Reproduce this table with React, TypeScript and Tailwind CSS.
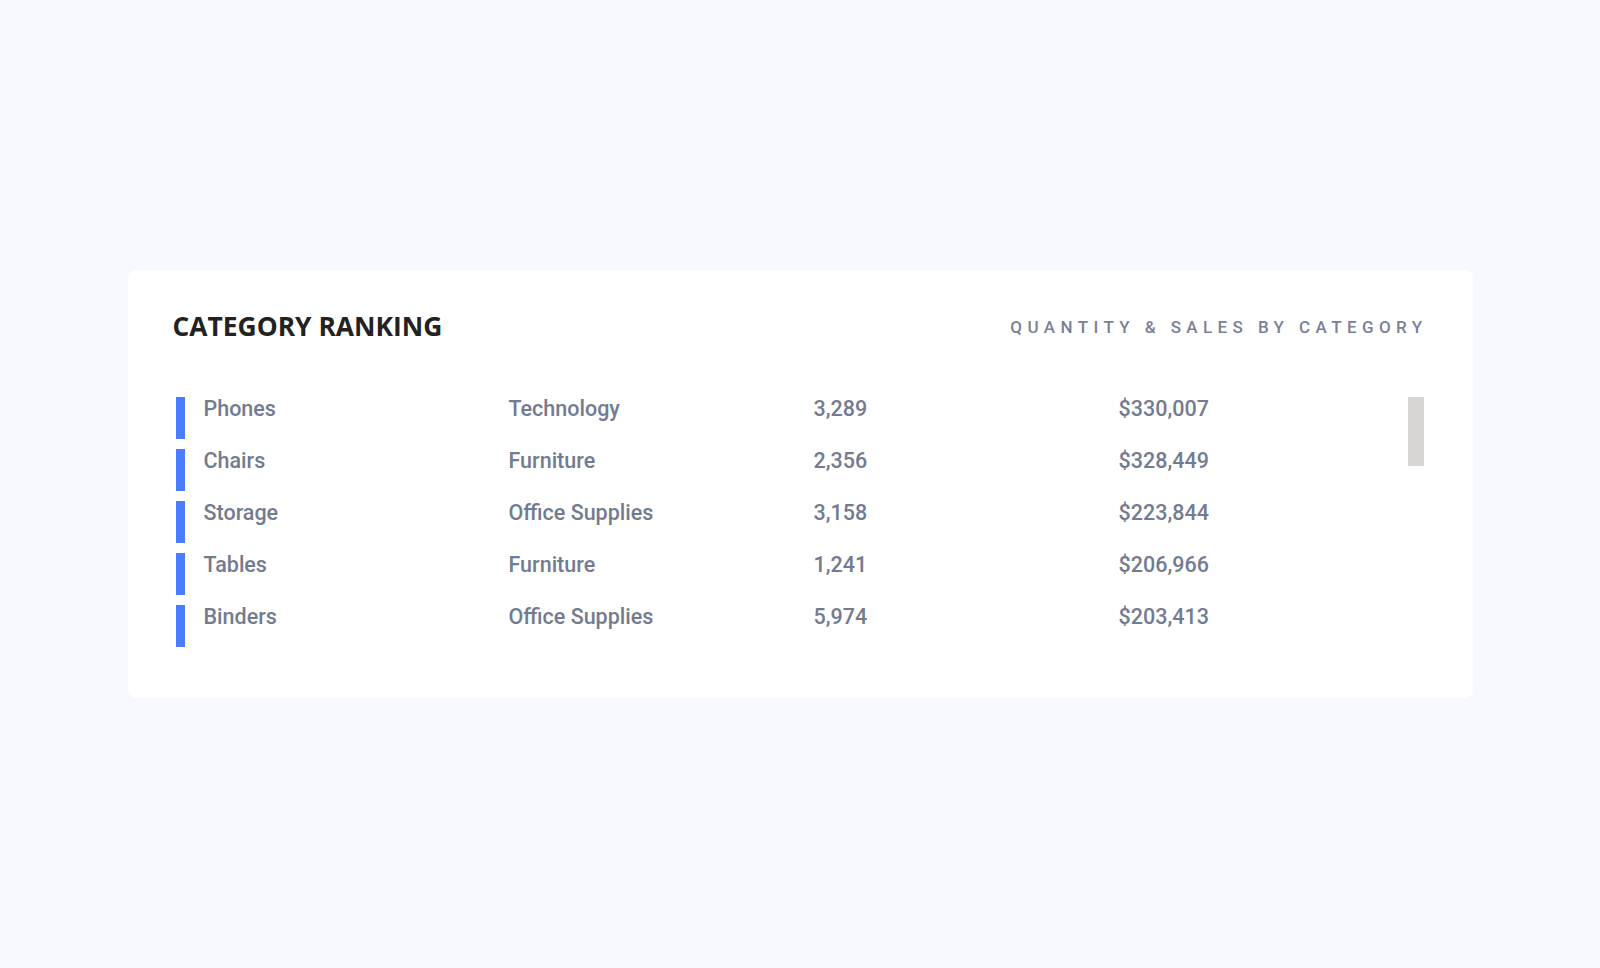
import React from "react";

type Row = {
  name: string;
  category: string;
  qty: string;
  sales: string;
};

const rows: Row[] = [
  { name: "Phones", category: "Technology", qty: "3,289", sales: "$330,007" },
  { name: "Chairs", category: "Furniture", qty: "2,356", sales: "$328,449" },
  { name: "Storage", category: "Office Supplies", qty: "3,158", sales: "$223,844" },
  { name: "Tables", category: "Furniture", qty: "1,241", sales: "$206,966" },
  { name: "Binders", category: "Office Supplies", qty: "5,974", sales: "$203,413" },
];

const CategoryRanking = () => {
  return (
    <div className="w-[1345px] bg-white rounded-lg px-[45px] pt-[43px] pb-[51px]">
      {/* Header */}
      <div className="flex items-center justify-between">
        <h2 className="text-[26.4px] leading-none font-bold text-[#222222] font-['Open_Sans',sans-serif]">
          CATEGORY RANKING
        </h2>
        <p className="mt-[2px] text-[17px] leading-none font-medium tracking-[5.4px] text-[#7a8196] font-['Roboto',sans-serif]">
          QUANTITY &amp; SALES BY CATEGORY
        </p>
      </div>

      {/* Ranking list */}
      <div className="mt-[58px] flex">
        <div className="flex-1 flex flex-col gap-[10px] ml-[3px]">
          {rows.map((row) => (
            <div key={row.name} className="flex h-[42px]">
              <div className="w-[9px] h-full bg-[#4a7cfb]" />
              <div className="ml-[19px] pt-[1px] grid grid-cols-[305px_305px_305px_1fr] text-[21.5px] leading-none font-medium text-[#737b91] font-['Roboto',sans-serif]">
                <span>{row.name}</span>
                <span>{row.category}</span>
                <span>{row.qty}</span>
                <span>{row.sales}</span>
              </div>
            </div>
          ))}
        </div>
        {/* Scrollbar */}
        <div className="w-4 mr-[4px] flex flex-col">
          <div className="h-[69px] bg-[#d7d6d5]" />
        </div>
      </div>
    </div>
  );
};

export default function App() {
  return (
    <div className="min-h-screen w-full bg-[#f8f9fe] flex items-center justify-center">
      <CategoryRanking />
    </div>
  );
}
